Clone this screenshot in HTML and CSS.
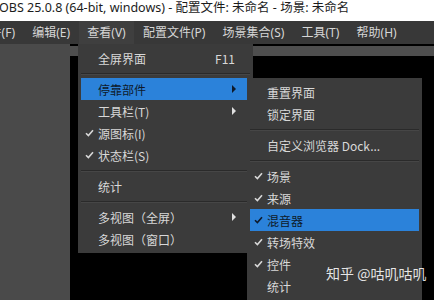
FILE: index.html
```html
<!DOCTYPE html>
<html lang="zh-CN">
<head>
    <meta charset="UTF-8">
    <title>OBS</title>
    <link rel="stylesheet" href="styles.css">
</head>
<body>
    <div class="titlebar">OBS 25.0.8 (64-bit, windows) - 配置文件: 未命名 - 场景: 未命名</div>

    <div class="menubar">
        <span class="menubar-item first">文件(F)</span>
        <span class="menubar-item">编辑(E)</span>
        <span class="menubar-item active">查看(V)</span>
        <span class="menubar-item">配置文件(P)</span>
        <span class="menubar-item">场景集合(S)</span>
        <span class="menubar-item">工具(T)</span>
        <span class="menubar-item">帮助(H)</span>
    </div>

    <div class="workspace">
        <div class="side-panel"></div>
        <div class="preview-col">
            <div class="preview-strip"></div>
            <div class="preview"></div>
        </div>
    </div>

    <!-- 查看 menu -->
    <div class="menu view-menu">
        <div class="item"><span class="label">全屏界面</span><span class="shortcut">F11</span></div>
        <div class="sep"></div>
        <div class="item selected"><span class="label">停靠部件</span><span class="arrow"></span></div>
        <div class="item"><span class="label">工具栏(T)</span><span class="arrow"></span></div>
        <div class="item"><span class="check"><svg width="9" height="8" viewBox="0 0 9 8"><polyline points="1,4.2 3.4,6.6 8,1.2" /></svg></span><span class="label">源图标(I)</span></div>
        <div class="item"><span class="check"><svg width="9" height="8" viewBox="0 0 9 8"><polyline points="1,4.2 3.4,6.6 8,1.2" /></svg></span><span class="label">状态栏(S)</span></div>
        <div class="sep"></div>
        <div class="item"><span class="label">统计</span></div>
        <div class="sep"></div>
        <div class="item"><span class="label">多视图（全屏）</span><span class="arrow"></span></div>
        <div class="item"><span class="label">多视图（窗口）</span></div>
    </div>

    <!-- 停靠部件 submenu -->
    <div class="menu dock-menu">
        <div class="item"><span class="label">重置界面</span></div>
        <div class="item"><span class="label">锁定界面</span></div>
        <div class="sep"></div>
        <div class="item"><span class="label">自定义浏览器 Dock...</span></div>
        <div class="sep"></div>
        <div class="item"><span class="check"><svg width="9" height="8" viewBox="0 0 9 8"><polyline points="1,4.2 3.4,6.6 8,1.2" /></svg></span><span class="label">场景</span></div>
        <div class="item"><span class="check"><svg width="9" height="8" viewBox="0 0 9 8"><polyline points="1,4.2 3.4,6.6 8,1.2" /></svg></span><span class="label">来源</span></div>
        <div class="item selected"><span class="check"><svg width="9" height="8" viewBox="0 0 9 8"><polyline points="1,4.2 3.4,6.6 8,1.2" /></svg></span><span class="label">混音器</span></div>
        <div class="item"><span class="check"><svg width="9" height="8" viewBox="0 0 9 8"><polyline points="1,4.2 3.4,6.6 8,1.2" /></svg></span><span class="label">转场特效</span></div>
        <div class="item"><span class="check"><svg width="9" height="8" viewBox="0 0 9 8"><polyline points="1,4.2 3.4,6.6 8,1.2" /></svg></span><span class="label">控件</span></div>
        <div class="item"><span class="label">统计</span></div>
    </div>

    <div class="watermark">知乎 @咕叽咕叽</div>
</body>
</html>
```

FILE: styles.css
```css
body {
    margin: 0;
    width: 434px;
    height: 300px;
    overflow: hidden;
    position: relative;
    font-family: "Noto Sans", "Noto Sans CJK SC", sans-serif;
    background-color: #000;
    display: flex;
    flex-direction: column;
}
.titlebar {
    height: 21px;
    flex: none;
    background-color: #fff;
    color: #1c1c1c;
    font-size: 12.5px;
    line-height: 16px;
    margin-left: -1px;
    white-space: nowrap;
}
.menubar {
    height: 23px;
    flex: none;
    display: flex;
    background-color: #383838;
    color: #d6d6d6;
    font-size: 12px;
    line-height: 23px;
    white-space: nowrap;
}
.menubar-item {
    padding: 0 8.6px;
}
.menubar-item.first {
    margin-left: -31px;
}
.menubar-item.active {
    background-color: #3f3f3f;
}
.workspace {
    flex: 1;
    display: flex;
}
.side-panel {
    width: 70px;
    background-color: #4a4a4a;
}
.preview-col {
    flex: 1;
    display: flex;
    flex-direction: column;
}
.preview-strip {
    height: 10px;
    margin-top: 2px;
    background-color: #4e4e4e;
}
.preview {
    flex: 1;
    background-color: #000;
}

/* popup menus */
.menu {
    position: absolute;
    width: 175px;
    padding: 3px 0;
    background-color: #3b3b3b;
    color: #d8d8d8;
    font-size: 12px;
    font-family: "Noto Sans CJK SC", sans-serif;
}
.view-menu {
    left: 78px;
    top: 44px;
}
.dock-menu {
    left: 247px;
    top: 78px;
    height: 216px;
    overflow: hidden;
}
.item {
    height: 22px;
    margin: 0 3px;
    padding: 0 14px 0 17px;
    display: flex;
    align-items: center;
    position: relative;
    white-space: nowrap;
}
.item .label {
    flex: 1;
}
.item.selected {
    background-color: #2b82da;
    color: #0e1a2b;
}
.check {
    position: absolute;
    left: 4px;
    top: 7px;
    line-height: 0;
}
.check polyline {
    fill: none;
    stroke: #d8d8d8;
    stroke-width: 1.6;
}
.selected .check polyline {
    stroke: #0e1a2b;
}
.shortcut {
    padding-right: 1px;
}
.arrow {
    width: 0;
    height: 0;
    border-top: 4px solid transparent;
    border-bottom: 4px solid transparent;
    border-left: 4px solid #e0e0e0;
}
.selected .arrow {
    border-left-color: #0e1a2b;
}
.sep {
    height: 1px;
    margin: 4px 3px 4px 3px;
    background-color: #2a2a2a;
    box-shadow: 0 1px 0 #464646;
}

.watermark {
    position: absolute;
    left: 326px;
    top: 263px;
    color: rgba(255, 255, 255, 0.88);
    font-size: 14px;
    font-family: "Noto Sans CJK SC", sans-serif;
    white-space: nowrap;
}
```
